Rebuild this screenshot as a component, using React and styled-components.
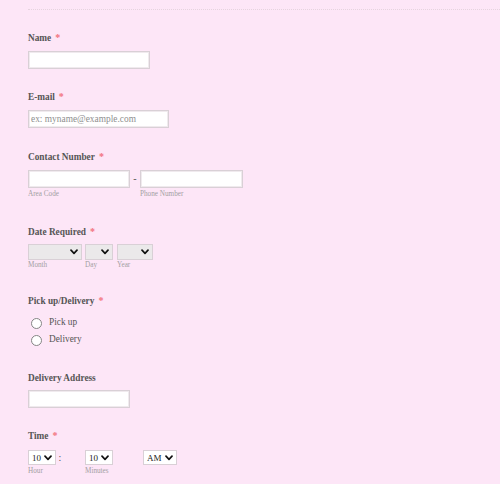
import styled, { createGlobalStyle } from "styled-components";

const GlobalStyle = createGlobalStyle`
    html, body {
        margin: 0;
        padding: 0;
        background: #fde6f7;
    }
    body {
        font-family: "Liberation Serif", "Times New Roman", serif;
    }
`

const Page = styled.div`
    min-height: 484px;
    padding: 9px 0 0 28px;
    box-sizing: border-box;
`

const Rule = styled.div`
    border-top: 1px dotted #e6d3df;
`

const Field = styled.div`
    margin-top: ${(p) => p.$top}px;
`

const Label = styled.div`
    font-size: 9.3px;
    font-weight: bold;
    line-height: 14px;
    color: #555555;
`

const Required = styled.span`
    color: #f2707c;
    margin-left: 4px;
    font-size: 10px;
`

const Input = styled.input`
    display: block;
    box-sizing: border-box;
    width: ${(p) => p.$w}px;
    height: 18px;
    margin: ${(p) => p.$top ?? 6}px 0 0 0;
    padding: 0 2px;
    border: 1px solid #d9d0d6;
    box-shadow: inset 0 0 0 1px #f0eaee;
    background: #ffffff;
    font-family: "Liberation Serif", "Times New Roman", serif;
    font-size: 9.4px;
    color: #555555;
    outline: none;

    &::placeholder {
        color: #8f8f8f;
    }
`

const Row = styled.div`
    display: flex;
    align-items: flex-start;
    gap: ${(p) => p.$gap || 0}px;
    margin-top: ${(p) => p.$top || 0}px;
`

const Col = styled.div`
    display: flex;
    flex-direction: column;
    width: ${(p) => (p.$w ? `${p.$w}px` : "auto")};
`

const Inline = styled.div`
    display: flex;
    align-items: center;
`

const Dash = styled.span`
    width: 10px;
    text-align: center;
    font-size: 10px;
    color: #555555;
    line-height: 18px;
`

const Colon = styled.span`
    width: 8px;
    text-align: center;
    font-size: 10px;
    color: #555555;
`

const Sub = styled.div`
    font-size: 7.2px;
    line-height: ${(p) => p.$lh || 12}px;
    color: #a3a0a2;
`

const SelectBox = styled.div`
    display: flex;
    align-items: center;
    box-sizing: border-box;
    width: ${(p) => p.$w}px;
    height: ${(p) => p.$h || 16}px;
    padding-right: 3px;
    border: 1px solid #d9d0d6;
    background: ${(p) => (p.$empty ? "#ebe9ea" : "#ffffff")};
`

const Select = styled.select`
    flex: 1;
    min-width: 0;
    height: 100%;
    margin: 0;
    padding: 0 0 0 3px;
    border: none;
    background: transparent;
    appearance: none;
    outline: none;
    font-family: "Liberation Serif", "Times New Roman", serif;
    font-size: 9px;
    color: #222222;
`

const Chevron = () => (
    <svg width="8" height="6" viewBox="0 0 8 6">
        <path d="M1 1.2 L4 4.3 L7 1.2" fill="none" stroke="#111" strokeWidth="1.7" strokeLinecap="round" strokeLinejoin="round" />
    </svg>
)

const Dropdown = ({ w, h, empty, value, options = [] }) => (
    <SelectBox $w={w} $h={h} $empty={empty}>
        <Select defaultValue={value}>
            {empty && <option value=""></option>}
            {options.map((o) => <option key={o}>{o}</option>)}
        </Select>
        <Chevron />
    </SelectBox>
)

const Options = styled.div`
    display: flex;
    flex-direction: column;
    margin-top: 5px;
`

const Option = styled.label`
    display: flex;
    align-items: center;
    height: 17px;
    font-size: 9.3px;
    color: #555555;
`

const Radio = styled.input`
    appearance: none;
    box-sizing: border-box;
    width: 11px;
    height: 11px;
    margin: 3px 7px 0 3px;
    border: 1.2px solid #858585;
    border-radius: 50%;
    background: #ffffff;

    &:checked {
        background: radial-gradient(circle, #555 0 2.5px, #fff 3px);
    }
`

const App = () => {
    return (
        <>
            <GlobalStyle />
            <Page>
                <Rule />

                <Field $top={21}>
                    <Label>Name<Required>*</Required></Label>
                    <Input $w={122} />
                </Field>

                <Field $top={21}>
                    <Label>E-mail<Required>*</Required></Label>
                    <Input $w={141} placeholder="ex: myname@example.com" />
                </Field>

                <Field $top={22}>
                    <Label>Contact Number<Required>*</Required></Label>
                    <Row $top={6}>
                        <Col>
                            <Input $w={102} $top={0} />
                            <Sub>Area Code</Sub>
                        </Col>
                        <Dash>-</Dash>
                        <Col>
                            <Input $w={103} $top={0} />
                            <Sub>Phone Number</Sub>
                        </Col>
                    </Row>
                </Field>

                <Field $top={25}>
                    <Label>Date Required<Required>*</Required></Label>
                    <Row $top={5}>
                        <Col $w={57}>
                            <Dropdown w={54} empty />
                            <Sub $lh={11}>Month</Sub>
                        </Col>
                        <Col $w={32}>
                            <Dropdown w={28} empty />
                            <Sub $lh={11}>Day</Sub>
                        </Col>
                        <Col>
                            <Dropdown w={36} empty />
                            <Sub $lh={11}>Year</Sub>
                        </Col>
                    </Row>
                </Field>

                <Field $top={23}>
                    <Label>Pick up/Delivery<Required>*</Required></Label>
                    <Options>
                        <Option><Radio type="radio" name="pickup" />Pick up</Option>
                        <Option><Radio type="radio" name="pickup" />Delivery</Option>
                    </Options>
                </Field>

                <Field $top={24}>
                    <Label>Delivery Address</Label>
                    <Input $w={102} $top={5} />
                </Field>

                <Field $top={21}>
                    <Label>Time<Required>*</Required></Label>
                    <Row $top={7}>
                        <Col $w={57}>
                            <Inline>
                                <Dropdown w={28} h={15} value="10" options={["10"]} />
                                <Colon>:</Colon>
                            </Inline>
                            <Sub $lh={13}>Hour</Sub>
                        </Col>
                        <Col $w={58}>
                            <Dropdown w={28} h={15} value="10" options={["10"]} />
                            <Sub $lh={13}>Minutes</Sub>
                        </Col>
                        <Col>
                            <Dropdown w={34} h={15} value="AM" options={["AM", "PM"]} />
                        </Col>
                    </Row>
                </Field>
            </Page>
        </>
    );
}

export default App;
